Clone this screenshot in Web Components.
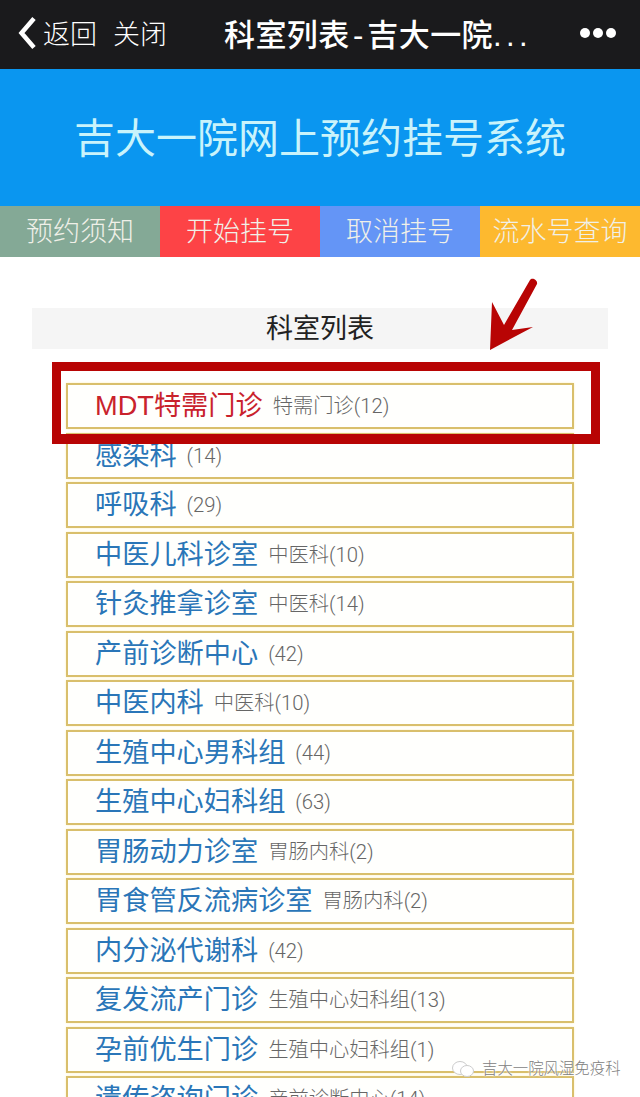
<!DOCTYPE html>
<html lang="zh">
<head>
<meta charset="utf-8">
<title>科室列表</title>
<style>
    html, body { margin: 0; padding: 0; height: 1097px; overflow: hidden; background: #fff; }
    body { position: relative; font-family: "Liberation Sans", "Noto Sans CJK SC", sans-serif; font-weight: 300; }
</style>
</head>
<body>
<app-nav label="科室列表-吉大一院"></app-nav>
<app-banner>吉大一院网上预约挂号系统</app-banner>
<app-tabs></app-tabs>
<dept-list heading="科室列表">
    <dept-row active name="MDT特需门诊" info="特需门诊(12)"></dept-row>
    <dept-row name="感染科" info="(14)"></dept-row>
    <dept-row name="呼吸科" info="(29)"></dept-row>
    <dept-row name="中医儿科诊室" info="中医科(10)"></dept-row>
    <dept-row name="针灸推拿诊室" info="中医科(14)"></dept-row>
    <dept-row name="产前诊断中心" info="(42)"></dept-row>
    <dept-row name="中医内科" info="中医科(10)"></dept-row>
    <dept-row name="生殖中心男科组" info="(44)"></dept-row>
    <dept-row name="生殖中心妇科组" info="(63)"></dept-row>
    <dept-row name="胃肠动力诊室" info="胃肠内科(2)"></dept-row>
    <dept-row name="胃食管反流病诊室" info="胃肠内科(2)"></dept-row>
    <dept-row name="内分泌代谢科" info="(42)"></dept-row>
    <dept-row name="复发流产门诊" info="生殖中心妇科组(13)"></dept-row>
    <dept-row name="孕前优生门诊" info="生殖中心妇科组(1)"></dept-row>
    <dept-row name="遗传咨询门诊" info="产前诊断中心(14)"></dept-row>
</dept-list>
<red-callout></red-callout>
<wechat-mark>吉大一院风湿免疫科</wechat-mark>

<script>
class AppNav extends HTMLElement {
    connectedCallback() {
        this.attachShadow({ mode: 'open' });
        const label = this.getAttribute('label').replace('-', '<span class="dash">-</span>');
        this.shadowRoot.innerHTML = `
            <style>
                :host { display: flex; align-items: center; height: 69px; padding-bottom: 4px; box-sizing: border-box; background: #1a1a1c; color: #fff; }
                .left { display: flex; align-items: center; width: 200px; padding-left: 18px; box-sizing: border-box; font-size: 27px; font-weight: 300; }
                .left svg { margin-right: 6px; }
                .left span + span { margin-left: 16px; }
                .title { width: 332px; margin-left: 24px; font-size: 31px; font-weight: 500; white-space: nowrap; letter-spacing: 0.4px; }
                .dash { margin: 0 3.5px; }
                .more { letter-spacing: 4.4px; }
                .dots { display: flex; gap: 3px; margin-left: 24px; }
                .dots i { width: 10px; height: 10px; border-radius: 50%; background: #fff; }
            </style>
            <div class="left">
                <svg width="19" height="34" viewBox="0 0 19 34"><path d="M16 2.5 3.5 17 16 31.5" fill="none" stroke="#fff" stroke-width="4.5"/></svg>
                <span>返回</span><span>关闭</span>
            </div>
            <div class="title">${label}<span class="more">...</span></div>
            <div class="dots"><i></i><i></i><i></i></div>
        `;
    }
}

class AppBanner extends HTMLElement {
    constructor() {
        super();
        this.attachShadow({ mode: 'open' });
        this.shadowRoot.innerHTML = `
            <style>
                :host { display: flex; align-items: center; justify-content: center; box-sizing: border-box; height: 137px; padding-bottom: 5px; background: #0a96f0; color: #c9f3fb; font-size: 41px; font-weight: 400; }
            </style>
            <slot></slot>
        `;
    }
}

class AppTabs extends HTMLElement {
    constructor() {
        super();
        this.attachShadow({ mode: 'open' });
        const tabs = [['预约须知', '#84a996'], ['开始挂号', '#fd4346'], ['取消挂号', '#6495f6'], ['流水号查询', '#fdb92f']];
        this.shadowRoot.innerHTML = `
            <style>
                :host { display: grid; grid-template-columns: repeat(4, 160px); height: 51px; color: #f0f0e8; font-size: 27px; }
                div { display: flex; align-items: center; justify-content: center; box-sizing: border-box; padding-bottom: 4px; white-space: nowrap; overflow: hidden; }
            </style>
            ${tabs.map(t => `<div style="background:${t[1]}">${t[0]}</div>`).join('')}
        `;
    }
}

class DeptList extends HTMLElement {
    connectedCallback() {
        this.attachShadow({ mode: 'open' });
        this.shadowRoot.innerHTML = `
            <style>
                :host { display: block; padding: 51px 32px 0; }
                h2 { margin: 0 0 34px; height: 41px; line-height: 42px; background: #f5f5f5; text-align: center; color: #222; font-size: 27px; font-weight: 400; }
                .rows { display: flex; flex-direction: column; gap: 3.5px; margin: 0 34px; }
            </style>
            <h2>${this.getAttribute('heading')}</h2>
            <div class="rows"><slot></slot></div>
        `;
    }
}

class DeptRow extends HTMLElement {
    connectedCallback() {
        this.attachShadow({ mode: 'open' });
        this.shadowRoot.innerHTML = `
            <style>
                :host { display: flex; align-items: center; flex: none; box-sizing: border-box; height: 46px; padding-left: 27px; border: 2px solid #d9bf6c; background: #fffffd; box-shadow: 0 0 2px #fdf0b8; white-space: nowrap; }
                .name { color: #2a76b8; font-size: 27.2px; font-weight: 400; line-height: 36px; }
                :host([active]) .name { color: #c9222c; }
                .info { margin-left: 10px; color: #666; font-family: Roboto, "Noto Sans CJK SC", sans-serif; font-size: 20.3px; font-weight: 300; line-height: 36px; }
            </style>
            <span class="name">${this.getAttribute('name')}</span>
            <span class="info">${this.getAttribute('info')}</span>
        `;
    }
}

// drawn over the list: the red frame and arrow pasted on the screenshot
class RedCallout extends HTMLElement {
    constructor() {
        super();
        this.attachShadow({ mode: 'open' });
        this.shadowRoot.innerHTML = `
            <style>
                :host { display: block; }
                .frame { position: absolute; left: 52px; top: 362px; width: 548px; height: 82px; box-sizing: border-box; border: solid #b80404; border-width: 9px 9px 10px; }
                svg { position: absolute; left: 485px; top: 275px; }
            </style>
            <div class="frame"></div>
            <svg width="60" height="80" viewBox="0 0 60 80"><path d="M5 75 7 27 19 50 45 5C47 2 53 5 52 9L27 55 48 52z" fill="#b80404"/></svg>
        `;
    }
}

class WechatMark extends HTMLElement {
    constructor() {
        super();
        this.attachShadow({ mode: 'open' });
        this.shadowRoot.innerHTML = `
            <style>
                :host { position: absolute; left: 452px; top: 1058px; display: flex; align-items: center; gap: 7px; color: #808080; font-size: 15.4px; line-height: 22px; white-space: nowrap; text-shadow: 0 0 2px #fff, 0 0 2px #fff; }
            </style>
            <svg width="23" height="18" viewBox="0 0 23 18">
                <ellipse cx="8" cy="8" rx="7.5" ry="6.5" fill="#fff" stroke="#ccc"/>
                <ellipse cx="15" cy="11" rx="6.5" ry="5.5" fill="#fff" stroke="#ccc"/>
            </svg>
            <span><slot></slot></span>
        `;
    }
}

customElements.define('app-nav', AppNav);
customElements.define('app-banner', AppBanner);
customElements.define('app-tabs', AppTabs);
customElements.define('dept-list', DeptList);
customElements.define('dept-row', DeptRow);
customElements.define('red-callout', RedCallout);
customElements.define('wechat-mark', WechatMark);
</script>
</body>
</html>
